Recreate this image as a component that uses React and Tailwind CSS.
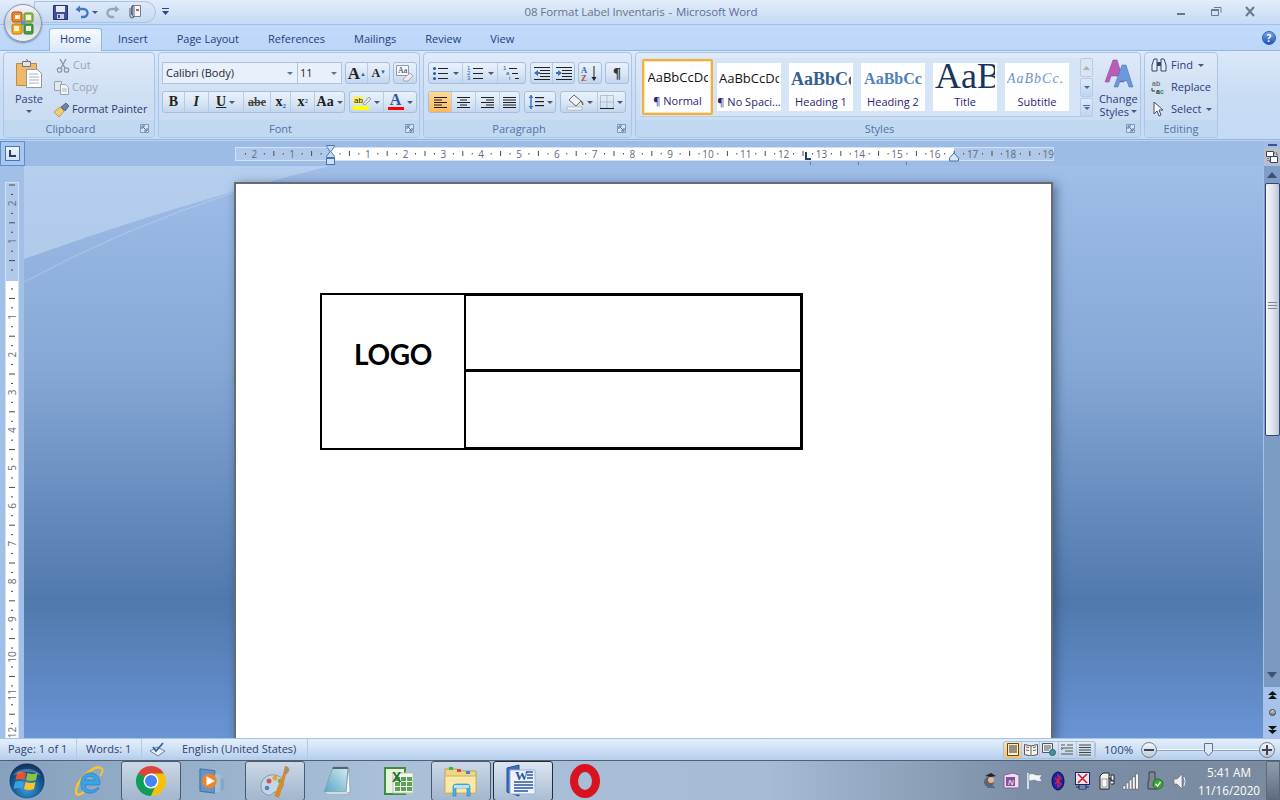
import * as React from "react"

const serif = "font-['Liberation_Serif',serif]"

function Caret({ className = "", color = "#44597f" }) {
  return (
    <svg width="6" height="3" viewBox="0 0 6 3" className={"shrink-0 " + className}>
      <path d="M0 0h6L3 3z" fill={color} />
    </svg>
  )
}

function Launcher() {
  return (
    <svg width="9" height="9" viewBox="0 0 9 9" className="shrink-0">
      <path d="M.5.5h8v8h-8z" fill="#d6e4f5" stroke="#7e98bd" />
      <path d="M2 2h3M2 2v3M3 3l3.5 3.5M7 4v3H4" fill="none" stroke="#4a6b9c" />
    </svg>
  )
}

function Group({ title, width, children, launcher = true, className = "" }) {
  return (
    <div className={"flex h-[86px] flex-col overflow-hidden rounded-[4px] border border-[#a9c6e8] bg-gradient-to-b from-[#dfeafa] via-[#cfdff3] to-[#c8dbf3] " + width + " " + className}>
      <div className="relative flex-1">{children}</div>
      <div className="flex h-[17px] items-center bg-[#c1d8f1] px-[5px] text-[11px] leading-none text-[#5273a8]">
        <span className={"flex-1 text-center " + (launcher ? "pr-[8px]" : "")}>{title}</span>
        {launcher && <Launcher />}
      </div>
    </div>
  )
}

function Strip({ children, className = "" }) {
  return (
    <div className={"flex h-[22px] items-stretch overflow-hidden rounded-[3px] border border-[#a5bfdf] bg-gradient-to-b from-[#e9f1fb] via-[#dbe7f6] to-[#c3d6ee] " + className}>
      {children}
    </div>
  )
}

function Cell({ w, children, last, active }) {
  return (
    <div className={"flex items-center justify-center gap-[3px] " + w + " " + (last ? "" : "border-r border-[#b6cbe5] ") + (active ? "bg-gradient-to-b from-[#fcd999] to-[#fbb859]" : "")}>
      {children}
    </div>
  )
}

function Lines({ kind }) {
  const rows = {
    left: [[0, 13], [0, 8], [0, 13], [0, 8], [0, 13]],
    center: [[0, 13], [3, 7], [0, 13], [3, 7], [0, 13]],
    right: [[0, 13], [5, 8], [0, 13], [5, 8], [0, 13]],
    justify: [[0, 13], [0, 13], [0, 13], [0, 13], [0, 13]],
  }[kind]
  return (
    <svg width="13" height="13" viewBox="0 0 13 13">
      {rows.map(([x, w], i) => (
        <rect key={i} x={x} y={1 + i * 2.5} width={w} height="1" fill="#1d1d1d" />
      ))}
    </svg>
  )
}

function ListIcon({ type }) {
  return (
    <svg width="18" height="15" viewBox="0 0 18 15">
      {[2, 7, 12].map((y, i) => (
        <g key={y}>
          {type === "bullet" && <rect x="1" y={y - 1} width="3" height="3" rx="1.5" fill="#2b5a9e" />}
          {type === "number" && <text x="0" y={y + 2} fontSize="6" fill="#2b5a9e" fontFamily="Liberation Sans">{i + 1}</text>}
          {type === "multi" && <text x={i * 3} y={y + 2} fontSize="6" fill="#2b5a9e" fontFamily="Liberation Sans">{["1", "a", "i"][i]}</text>}
          <rect x={type === "multi" ? 6 + i * 3 : 6} y={y} width={type === "multi" ? 8 - i * 2 : 10} height="1" fill="#222" />
        </g>
      ))}
    </svg>
  )
}

function IndentIcon({ dir }) {
  return (
    <svg width="16" height="14" viewBox="0 0 16 14">
      {[1, 4, 7, 10, 13].map((y, i) => (
        <rect key={y} x={i === 0 || i === 4 ? 0 : 6} y={y} width={i === 0 || i === 4 ? 16 : 10} height="1" fill="#222" />
      ))}
      <path d={dir === "out" ? "M0 7l4-3v2h2v2H4v2z" : "M6 7L2 4v2H0v2h2v2z"} fill="#3f6fb5" />
    </svg>
  )
}

function Save() {
  return (
    <svg width="15" height="15" viewBox="0 0 15 15">
      <path d="M.5.5h14v14h-14z" fill="#3d4f9e" stroke="#26306f" />
      <rect x="3" y="1" width="9" height="6" fill="#e6ecf7" />
      <rect x="4" y="9" width="7" height="5" fill="#c8cfe0" />
      <rect x="5" y="10" width="2" height="3" fill="#3d4f9e" />
    </svg>
  )
}

function Undo({ color, flip }) {
  return (
    <svg width="14" height="14" viewBox="0 0 14 14" className={flip ? "-scale-x-100" : ""}>
      <path d="M4 4h4.500a3.600 3.600 0 0 1 0 8H6" fill="none" stroke={color} strokeWidth="2.400" />
      <path d="M.5 4.500 5 .5v7z" fill={color} />
    </svg>
  )
}

function OfficeButton() {
  return (
    <div className="absolute left-[4px] top-[4px] z-10 flex h-[38px] w-[38px] items-center justify-center rounded-full border border-[#8a98aa] bg-gradient-to-b from-[#f4f6f9] via-[#c9d3de] to-[#eef2f6] shadow-[0_1px_2px_rgba(50,70,100,0.6)]">
      <svg width="24" height="24" viewBox="0 0 24 24">
        <rect x="1" y="1" width="10" height="10" rx="2" fill="#ed8a1f" stroke="#b4491a" />
        <rect x="4" y="4" width="5" height="4" fill="#fbf1dc" />
        <rect x="13" y="2" width="9" height="9" rx="1.500" fill="#9cc14a" stroke="#5c8a24" />
        <rect x="15" y="4" width="5" height="5" fill="#f4f8e5" />
        <rect x="1" y="13" width="10" height="10" rx="2" fill="#f3b315" stroke="#cf6b12" />
        <rect x="3" y="15" width="5" height="5" fill="#fdf3d0" />
        <rect x="13" y="13" width="9" height="10" rx="1.500" fill="#4f9e3c" stroke="#2f7a2e" />
        <rect x="15" y="15" width="5" height="5" fill="#e9f5e2" />
        <circle cx="12" cy="12" r="2.400" fill="#5a8fd1" />
      </svg>
    </div>
  )
}

function TitleBar() {
  return (
    <div className="relative grid h-[25px] grid-cols-[1fr_auto_1fr] items-center border-b border-[#9fc1ea] bg-gradient-to-b from-[#e3edfb] via-[#d4e3f7] to-[#c6daf5]">
      <div className="flex items-center">
        <div className="ml-[34px] flex h-[22px] w-[122px] items-center rounded-r-[11px] border border-[#a9c2e4] bg-gradient-to-b from-[#dde9f9] to-[#c6d9f2] pl-[18px]">
          <Save />
          <span className="ml-[7px]"><Undo color="#3b78c9" /></span>
          <Caret className="ml-[3px]" />
          <span className="ml-[8px]"><Undo color="#96a6ba" flip /></span>
          <svg width="16" height="16" viewBox="0 0 16 16" className="ml-[7px]">
            <path d="M5.500 1.500h8v11h-8z" fill="#f6f8fb" stroke="#6c7f99" />
            <rect x="9" y="5" width="3" height="2" fill="#d8564a" />
            <path d="M3 4v8a2 2 0 0 0 4 0V3a1.200 1.200 0 0 0-2.400 0v8" fill="none" stroke="#4c5e78" />
          </svg>
        </div>
        <svg width="7" height="8" viewBox="0 0 7 8" className="ml-[6px]">
          <rect width="7" height="1" fill="#2a4a85" />
          <path d="M0 3h7L3.500 7z" fill="#2a4a85" />
        </svg>
      </div>
      <div className="pl-[2px] text-[11.500px] leading-none tracking-[-0.1px] text-[#6a7488]">
        08 Format Label Inventaris <span className="mx-[1px]">-</span> <span className="text-[#5b6d9c]">Microsoft Word</span>
      </div>
      <div className="flex items-center justify-end">
        <svg width="92" height="14" viewBox="0 0 92 14" className="mr-[12px]">
          <rect x="1" y="8" width="8" height="2" fill="#6b7890" />
          <path d="M35.500 4.500h7v6h-7zM38 2.500h7v5" fill="none" stroke="#6b7890" />
          <rect x="35" y="4" width="8" height="2" fill="#6b7890" />
          <path d="M70 2l8 9M78 2l-8 9" stroke="#6b7890" strokeWidth="2" />
        </svg>
      </div>
    </div>
  )
}

function Tabs() {
  const names = ["Insert", "Page Layout", "References", "Mailings", "Review", "View"]
  return (
    <div className="flex h-[25px] items-end bg-gradient-to-b from-[#c3dbfa] to-[#bcd6f9] pl-[49px] text-[11px] text-[#223f7c]">
      <div className="-mb-px z-[1] flex h-[23px] w-[53px] items-center justify-center rounded-t-[3px] border border-b-0 border-[#92b6e3] bg-gradient-to-b from-[#f7fbff] to-[#dde9f9] pb-[1px]">Home</div>
      <div className="ml-[16px] flex h-[23px] items-center gap-[29px] pt-[1px]">
        {names.map((n) => <span key={n}>{n}</span>)}
      </div>
      <div className="ml-auto mr-[4px] flex h-[23px] items-center pb-[2px]">
        <div className="flex h-[14px] w-[14px] items-center justify-center rounded-full border border-[#2d5fb5] bg-gradient-to-b from-[#77a6ea] to-[#1c54b5] text-[10px] font-bold leading-none text-white">?</div>
      </div>
    </div>
  )
}

function Clipboard() {
  return (
    <Group title="Clipboard" width="w-[152px]">
      <div className="flex h-full pl-[10px] pt-[4px]">
        <div className="flex w-[30px] flex-col items-center pt-[1px] text-[11px] leading-none text-[#36427f]">
          <svg width="28" height="31" viewBox="0 0 28 31">
            <path d="M1.500 5.500h20v22h-20z" fill="#f0b968" stroke="#b98b4f" />
            <path d="M7.500 3.500h8v5h-8z" fill="#dfe3ea" stroke="#6c7480" />
            <path d="M11 1.500a2 2 0 0 1 2 2" fill="none" stroke="#6c7480" />
            <path d="M11.500 11.500h11l4 4v14h-15z" fill="#fff" stroke="#8d97a6" />
            <path d="M14 16h9M14 19h10M14 22h10M14 25h10" stroke="#a8b2c2" />
          </svg>
          <span className="mt-[4px]">Paste</span>
          <Caret className="mt-[6px]" />
        </div>
        <div className="ml-[10px] flex flex-col gap-[6px] text-[11px] leading-[16px]">
          <div className="flex h-[16px] items-center text-[#9ca5b3]">
            <svg width="16" height="15" viewBox="0 0 16 15" className="ml-[1px]">
              <path d="M5 1l5 9M11 1L6 10" stroke="#8e97a5" strokeWidth="1.400" />
              <circle cx="4.500" cy="12" r="2.200" fill="none" stroke="#8e97a5" strokeWidth="1.300" />
              <circle cx="11.500" cy="12" r="2.200" fill="none" stroke="#8e97a5" strokeWidth="1.300" />
            </svg>
            <span className="ml-[2px]">Cut</span>
          </div>
          <div className="flex h-[16px] items-center text-[#9ca5b3]">
            <svg width="16" height="15" viewBox="0 0 16 15">
              <path d="M.5 1.500h7v9h-7z" fill="#e3e7ee" stroke="#98a2b1" />
              <path d="M6.500 4.500h5l3 3v7h-8z" fill="#f3f5f9" stroke="#98a2b1" />
              <path d="M8 9h5M8 11h5" stroke="#aab3c0" />
            </svg>
            <span className="ml-[2px]">Copy</span>
          </div>
          <div className="flex h-[16px] items-center text-[#2c3c72]">
            <svg width="16" height="15" viewBox="0 0 16 15">
              <path d="M0 10l6-5 4 4-5 6z" fill="#f0cf6e" stroke="#a78431" strokeWidth=".7" />
              <path d="M7 5l5-4 3 3-4 5z" fill="#6c82ad" stroke="#3b4c73" strokeWidth=".7" />
            </svg>
            <span className="ml-[2px] whitespace-nowrap tracking-[-0.1px]">Format Painter</span>
          </div>
        </div>
      </div>
    </Group>
  )
}

function FontGroup() {
  const cls = serif + " font-bold text-[14px] leading-none text-[#222]"
  return (
    <Group title="Font" width="w-[262px]" className="ml-[3px]">
      <div className="flex flex-col gap-[7px] pl-[3px] pt-[9px]">
        <div className="flex h-[22px] items-stretch">
          <div className="flex w-[136px] items-center justify-between border border-[#abc3e0] bg-[#e8f0fb] pl-[3px] pr-[4px] text-[11px] text-[#26262e]">
            Calibri (Body)<Caret color="#5a7296" />
          </div>
          <div className="flex w-[44px] items-center justify-between border border-l-0 border-[#abc3e0] bg-[#e8f0fb] pl-[2px] pr-[4px] text-[11px] text-[#26262e]">
            11<Caret color="#5a7296" />
          </div>
          <Strip className="ml-[3px] w-[45px]">
            <Cell w="w-[23px]"><span className={serif + " text-[17px] font-bold leading-none text-[#222]"}>A<sup className="text-[6px] text-[#3765a8]">▲</sup></span></Cell>
            <Cell w="w-[21px]" last><span className={serif + " text-[12px] font-bold leading-none text-[#222]"}>A<sup className="text-[6px] text-[#3765a8]">▼</sup></span></Cell>
          </Strip>
          <Strip className="ml-[3px] w-[24px] justify-center">
            <svg width="20" height="18" viewBox="0 0 20 18" className="self-center">
              <path d="M1.500 1.500h12v10h-12z" fill="#f4f7fb" stroke="#8f9bad" />
              <text x="3" y="9" fontSize="8" fill="#333" fontFamily="Liberation Serif">Aa</text>
              <path d="M8 15l7-6 3 3-5 5H9z" fill="#f3e8ee" stroke="#8d8d98" strokeWidth=".7" />
            </svg>
          </Strip>
        </div>
        <div className="flex h-[22px] items-stretch">
          <Strip className="w-[183px]">
            <Cell w="w-[22px]"><span className={cls}>B</span></Cell>
            <Cell w="w-[24px]"><span className={cls + " italic"}>I</span></Cell>
            <Cell w="w-[35px]"><span className={cls + " underline"}>U</span><Caret /></Cell>
            <Cell w="w-[28px]"><span className={serif + " text-[12px] font-bold leading-none text-[#444] line-through"}>abe</span></Cell>
            <Cell w="w-[20px]"><span className={cls}>x<sub className="text-[7px] text-[#2b62ad]">2</sub></span></Cell>
            <Cell w="w-[24px]"><span className={cls}>x<sup className="text-[7px] text-[#2b62ad]">2</sup></span></Cell>
            <Cell w="w-[29px]" last><span className={cls}>Aa</span><Caret /></Cell>
          </Strip>
          <Strip className="ml-[4px] w-[68px]">
            <Cell w="w-[34px]">
              <svg width="18" height="16" viewBox="0 0 18 16">
                <rect y="2" width="10" height="8" fill="#f9f16b" />
                <text x="1" y="9" fontSize="8" fill="#222" fontFamily="Liberation Sans">ab</text>
                <path d="M10 10l6-7 2 2-6 6z" fill="#e3e6ec" stroke="#6d7480" strokeWidth=".6" />
                <rect y="12" width="16" height="4" fill="#ffff00" />
              </svg>
              <Caret />
            </Cell>
            <Cell w="w-[32px]" last>
              <div className="flex h-[16px] w-[16px] flex-col items-center">
                <span className={serif + " text-[16px] font-bold leading-[12px] text-[#2f5597]"}>A</span>
                <div className="mt-[1px] h-[4px] w-[16px] bg-[#ff0000]" />
              </div>
              <Caret />
            </Cell>
          </Strip>
        </div>
      </div>
    </Group>
  )
}

function Paragraph() {
  return (
    <Group title="Paragraph" width="w-[209px]" className="ml-[3px]">
      <div className="flex flex-col gap-[8px] pl-[4px] pt-[9px]">
        <div className="flex h-[21px] items-stretch">
          <Strip className="h-[21px] w-[98px]">
            <Cell w="w-[34px]"><ListIcon type="bullet" /><Caret /></Cell>
            <Cell w="w-[35px]"><ListIcon type="number" /><Caret /></Cell>
            <Cell w="w-[27px]" last><ListIcon type="multi" /></Cell>
          </Strip>
          <Strip className="ml-[4px] h-[21px] w-[45px]">
            <Cell w="w-[22px]"><IndentIcon dir="out" /></Cell>
            <Cell w="w-[21px]" last><IndentIcon dir="in" /></Cell>
          </Strip>
          <Strip className="ml-[3px] h-[21px] w-[24px] items-center justify-center">
            <svg width="18" height="17" viewBox="0 0 18 17" className="self-center">
              <text x="0" y="8" fontSize="8.500" fontWeight="bold" fill="#2c6bb3" fontFamily="Liberation Serif">A</text>
              <text x="0" y="16" fontSize="8.500" fontWeight="bold" fill="#b54a3a" fontFamily="Liberation Serif">Z</text>
              <path d="M13 1v13" stroke="#222" />
              <path d="M10.500 12h5L13 16z" fill="#222" />
            </svg>
          </Strip>
          <Strip className="ml-[3px] h-[21px] w-[24px] items-center justify-center">
            <span className={serif + " self-center text-[15px] font-bold leading-none text-[#333]"}>¶</span>
          </Strip>
        </div>
        <div className="flex h-[22px] items-stretch">
          <Strip className="w-[92px]">
            <Cell w="w-[23px]" active><Lines kind="left" /></Cell>
            <Cell w="w-[24px]"><Lines kind="center" /></Cell>
            <Cell w="w-[24px]"><Lines kind="right" /></Cell>
            <Cell w="w-[19px]" last><Lines kind="justify" /></Cell>
          </Strip>
          <Strip className="ml-[4px] w-[32px]">
            <Cell w="w-[30px]" last>
              <svg width="16" height="16" viewBox="0 0 16 16">
                <path d="M3 1v14" stroke="#3f76c2" strokeWidth="1.500" />
                <path d="M.5 4L3 1l2.500 3zM.5 12L3 15l2.500-3z" fill="#3f76c2" />
                {[3, 7, 11].map((y) => <rect key={y} x="7" y={y} width="9" height="1.200" fill="#222" />)}
              </svg>
              <Caret />
            </Cell>
          </Strip>
          <Strip className="ml-[4px] w-[66px]">
            <Cell w="w-[37px]">
              <svg width="18" height="17" viewBox="0 0 18 17">
                <path d="M8 1l7 6-5 5-7-6z" fill="#eef2f8" stroke="#5e6a7e" />
                <path d="M15 7c2 2 2 3 1.500 4" stroke="#8f6b2a" fill="none" strokeWidth="1.500" />
                <rect x="1" y="13" width="15" height="3" fill="#f7f7f0" stroke="#98a0a8" strokeWidth=".6" />
              </svg>
              <Caret />
            </Cell>
            <Cell w="w-[27px]" last>
              <svg width="14" height="14" viewBox="0 0 14 14">
                <path d="M.5.5h13v13H.5zM7 .5v13M.5 7h13" fill="none" stroke="#8b97a8" strokeDasharray="1 1" />
                <path d="M0 13.500h14" stroke="#222" />
              </svg>
              <Caret />
            </Cell>
          </Strip>
        </div>
      </div>
    </Group>
  )
}

function StyleItem({ label, preview, previewClass, active, align = "items-center justify-center" }) {
  return (
    <div className={"flex flex-col items-center overflow-hidden bg-white " + (active ? "-my-[3px] h-[56px] w-[71px] rounded-[2px] border-[2px] border-[#f4ae3d] shadow-[inset_0_0_0_1px_#fde6a8] pt-[1px]" : "h-[48px] w-[64px]")}>
      <div className={"flex h-[31px] w-[60px] overflow-hidden whitespace-nowrap leading-none " + align + " " + previewClass}>
        {preview}
      </div>
      <div className="mt-[1px] whitespace-nowrap text-[11px] leading-[14px] text-[#2b2374]">{label}</div>
    </div>
  )
}

function Styles() {
  return (
    <Group title="Styles" width="w-[506px]" className="ml-[3px]">
      <div className="flex h-full pl-[4px] pt-[5px]">
        <div className="flex h-[59px] w-[445px] items-center gap-[8px] border-b border-[#b3cce8] bg-[#d5e4f6] pl-[2px]">
          <StyleItem active label="¶ Normal" preview="AaBbCcDc" align="items-center justify-start" previewClass="text-[13px] text-[#111]" />
          <div className="-ml-[4px]">
            <StyleItem label="¶ No Spaci..." preview="AaBbCcDc" align="items-center justify-start" previewClass="text-[13px] text-[#111]" />
          </div>
          <StyleItem label="Heading 1" preview="AaBbCc" align="items-center justify-start" previewClass={serif + " text-[18px] font-bold text-[#365f91]"} />
          <StyleItem label="Heading 2" preview="AaBbCc" previewClass={serif + " text-[16px] font-bold text-[#4f81bd]"} />
          <StyleItem label="Title" preview="AaB" align="items-end justify-start" previewClass={serif + " text-[36px] text-[#17365d]"} />
          <StyleItem label="Subtitle" preview="AaBbCc." align="items-center justify-start" previewClass={serif + " text-[14px] italic tracking-[1px] text-[#6d94c6]"} />
        </div>
        <div className="ml-[-1px] flex h-[59px] w-[14px] flex-col gap-[1px]">
          {[0, 1, 2].map((i) => (
            <div key={i} className={"flex h-[19px] flex-col items-center justify-center rounded-[2px] border border-[#b5cce8] " + (i === 0 ? "bg-[#dbe4ef]" : "bg-gradient-to-b from-[#dfeafa] to-[#bfd5ef]")}>
              {i === 2 && <div className="mb-[1px] h-px w-[7px] bg-[#4d6a96]" />}
              {i === 0 ? (
                <svg width="7" height="4" viewBox="0 0 7 4"><path d="M0 4h7L3.500 0z" fill="#a5afbd" /></svg>
              ) : (
                <Caret color="#4d6a96" />
              )}
            </div>
          ))}
        </div>
        <div className="ml-[3px] flex w-[44px] flex-col items-center text-center text-[11px] leading-[13px] text-[#2d3a7c]">
          <svg width="31" height="32" viewBox="0 0 31 30">
            <path d="M10 1h4l7 22h-4l-2-6H8l-2 6H2z" fill="#b85db5" stroke="#8e3a92" strokeWidth=".5" />
            <path d="M19 6h4l7 22h-4l-2-6h-7l-2 6h-4z" fill="#6a9ad9" stroke="#3c6cb3" strokeWidth=".5" />
          </svg>
          <span className="mt-[2px]">Change</span>
          <span className="flex items-center gap-[2px]">Styles<Caret /></span>
        </div>
      </div>
    </Group>
  )
}

function Editing() {
  return (
    <Group title="Editing" width="w-[74px]" launcher={false} className="ml-[3px]">
      <div className="flex flex-col gap-[6px] pl-[6px] pt-[4px] text-[11px] leading-[16px] text-[#2d3a7c]">
        <div className="flex h-[16px] items-center gap-[4px]">
          <svg width="16" height="14" viewBox="0 0 16 14">
            <path d="M1 7l2-6h3v12H1zM15 7l-2-6h-3v12h5z" fill="#e5ecf8" stroke="#2f4678" />
            <rect x="6" y="4" width="4" height="4" fill="#2f4678" />
          </svg>
          Find<Caret className="ml-[1px]" />
        </div>
        <div className="flex h-[16px] items-center gap-[4px]">
          <svg width="16" height="15" viewBox="0 0 16 15">
            <text x="1" y="6" fontSize="7" fill="#777" fontWeight="bold" fontFamily="Liberation Sans">ab</text>
            <text x="5" y="14" fontSize="7" fill="#333" fontWeight="bold" fontFamily="Liberation Sans">a<tspan fill="#2a9a3a">c</tspan></text>
            <path d="M1 8v3h3" stroke="#333" fill="none" />
          </svg>
          Replace
        </div>
        <div className="flex h-[16px] items-center gap-[4px]">
          <svg width="16" height="15" viewBox="0 0 16 15">
            <path d="M3 0v12l3-3 2 5 2-1-2-5h4z" fill="#f6f8fb" stroke="#444e60" />
          </svg>
          Select<Caret className="ml-[1px]" />
        </div>
      </div>
    </Group>
  )
}

function Ribbon() {
  return (
    <div className="flex h-[90px] border-y border-[#92b6e0] bg-gradient-to-b from-[#dbe8f9] via-[#c9dcf4] to-[#c5daf4] pl-[3px] pt-[1px]">
      <Clipboard />
      <FontGroup />
      <Paragraph />
      <Styles />
      <Editing />
    </div>
  )
}

function HRuler() {
  const zero = 95
  const cm = 37.8
  const ticks = []
  for (let c = -3; c < 20; c++) {
    const x = zero + c * cm
    if (x + cm * 0.75 > 0) {
      ;[0.25, 0.75].forEach((f) => {
        if (x + f * cm > 2 && x + f * cm < 816) ticks.push(<rect key={c + "d" + f} x={x + f * cm} y="6" width="1" height="1.500" fill="#4a4a4a" />)
      })
      if (x + 0.5 * cm > 2 && x + 0.5 * cm < 816) ticks.push(<rect key={c + "l"} x={x + 0.5 * cm} y="4" width="1" height="5" fill="#4a4a4a" />)
    }
  }
  const nums = [-2, -1, 1, 2, 3, 4, 5, 6, 7, 8, 9, 10, 11, 12, 13, 14, 15, 16, 17, 18, 19]
  return (
    <svg width="820" height="24" viewBox="0 0 820 24" className="block">
      <rect x=".5" y="6.500" width="818" height="13" fill="#b0c9eb" stroke="#d2e1f5" />
      <rect x="95" y="7" width="624" height="12" fill="#fff" />
      <g transform="translate(0 6)">
        {ticks}
        {nums.map((n) => (
          <text key={n} x={zero + n * cm} y="10.500" textAnchor="middle" fontSize="10" fontFamily="Open Sans" fill="#5f6b80">{Math.abs(n)}</text>
        ))}
      </g>
      <path d="M91.500 4.500h8v1l-3.500 5 3.500 5v1h-8v-1l3.500-5-3.500-5z" fill="#c9daf0" stroke="#4a74ae" />
      <rect x="91.500" y="17.500" width="8" height="6" fill="#d2e0f2" stroke="#4a74ae" />
      <path d="M719 12l4.500 5v3h-9v-3z" fill="#d7e4f5" stroke="#4a74ae" />
      <path d="M570 11v8h6v-2h-4v-6z" fill="#243f6b" />
      <rect x="575" y="21" width="1" height="3" fill="#7a7a6c" />
      <rect x="623" y="21" width="1" height="3" fill="#7a7a6c" />
      <rect x="671" y="21" width="1" height="3" fill="#7a7a6c" />
    </svg>
  )
}

function RulerRow() {
  return (
    <div className="flex h-[26px] border-t border-[#c0d3ec] bg-[#9cbce5]">
      <div className="flex h-[25px] w-[25px] items-center justify-center border border-[#5d8bd6] bg-[#a9c6ec]">
        <div className="flex h-[15px] w-[15px] items-center justify-center border border-[#4a74ae] bg-gradient-to-b from-[#eef4fc] to-[#d2e1f5]">
          <svg width="7" height="7" viewBox="0 0 7 7"><path d="M0 0h2v5h5v2H0z" fill="#243f6b" /></svg>
        </div>
      </div>
      <div className="ml-[210px]"><HRuler /></div>
      <div className="ml-auto flex h-[25px] w-[16px] flex-col items-center bg-[#a1bfe6]">
        <div className="mt-[3px] h-[2px] w-[9px] bg-[#3c5487]" />
        <div className="mt-[2px] flex h-[17px] w-[16px] items-center justify-center bg-[#b8bfc9]">
          <svg width="12" height="12" viewBox="0 0 12 12">
            <path d="M.5.5h7v5h-7zM4.500 5.500h7v6h-7z" fill="#fff" stroke="#39435a" />
            <path d="M8 2h3v3M2 7v3h2" fill="none" stroke="#39435a" strokeDasharray="1 1" />
          </svg>
        </div>
      </div>
    </div>
  )
}

function VRuler() {
  const zero = 97
  const cm = 37.8
  const marks = []
  for (let c = -3; c < 13; c++) {
    const y = zero + c * cm
    if (y + 0.5 * cm > 2 && y + 0.5 * cm < 556) marks.push(<rect key={c + "l"} x="4" y={y + 0.5 * cm} width="6" height="1" fill="#4a4a4a" />)
    ;[0.25, 0.75].forEach((f) => {
      if (y + f * cm > 2 && y + f * cm < 556) marks.push(<rect key={c + "d" + f} x="6" y={y + f * cm} width="2" height="1" fill="#4a4a4a" />)
    })
  }
  const nums = [-2, -1, 1, 2, 3, 4, 5, 6, 7, 8, 9, 10, 11, 12]
  return (
    <svg width="14" height="556" viewBox="0 0 14 556" className="block">
      <rect x=".5" y=".5" width="13" height="556" fill="#b0c9eb" stroke="#d2e1f5" />
      <rect x="1" y="99" width="12" height="458" fill="#fff" />
      {marks}
      {nums.map((n) => (
        <text key={n} transform={`translate(10.500 ${zero + n * cm}) rotate(-90)`} textAnchor="middle" fontSize="10" fontFamily="Open Sans" fill="#5f6b80">{Math.abs(n)}</text>
      ))}
    </svg>
  )
}

function Page() {
  return (
    <div className="ml-[210px] w-[819px] border-l-2 border-r-2 border-t-2 border-[#666c74] bg-white pl-[84px] pt-[109px] shadow-[3px_2px_10px_rgba(40,60,90,0.6)]">
      <div className="flex h-[157px] w-[483px]">
        <div className="flex w-[144px] justify-center border-2 border-r-0 border-black pt-[42px] font-['Lato',sans-serif] text-[28px] font-bold leading-[34px] tracking-[-0.3px] text-black">
          LOGO
        </div>
        <div className="flex flex-1 flex-col border-[3px] border-l-2 border-black">
          <div className="h-[76px] border-b-[3px] border-black" />
          <div className="flex-1" />
        </div>
      </div>
    </div>
  )
}

function ScrollBar() {
  return (
    <div className="ml-auto flex w-[17px] flex-col items-center border-l border-[#a5c2e8] bg-gradient-to-b from-[#7e9dc9] via-[#7d9cc4] to-[#7a98c0]">
      <div className="flex h-[17px] w-full items-center justify-center">
        <svg width="10" height="6" viewBox="0 0 10 6"><path d="M0 6h10L5 0z" fill="#3d4f72" /></svg>
      </div>
      <div className="flex h-[253px] w-[15px] flex-col items-center justify-end rounded-[2px] border border-[#33477a] bg-gradient-to-r from-[#f3f5f8] via-[#e0e5ec] to-[#bcc6d2] pb-[126px]">
        <div className="h-px w-[9px] bg-[#7d8795]" />
        <div className="mt-[2px] h-px w-[9px] bg-[#7d8795]" />
        <div className="mt-[2px] h-px w-[9px] bg-[#7d8795]" />
      </div>
      <div className="mt-auto flex h-[19px] items-start pt-[4px]">
        <svg width="10" height="6" viewBox="0 0 10 6"><path d="M0 0h10L5 6z" fill="#3d4f72" /></svg>
      </div>
      <div className="flex h-[51px] w-full flex-col items-center justify-between bg-[#a7c2ec] py-[4px]">
        <svg width="9" height="9" viewBox="0 0 9 9"><path d="M0 4L4.500 0 9 4zM0 8l4.500-4L9 8z" fill="#111" /></svg>
        <div className="h-[7px] w-[7px] rounded-full border border-[#444] bg-gradient-to-b from-[#d8d8d8] to-[#777]" />
        <svg width="9" height="9" viewBox="0 0 9 9"><path d="M0 1l4.500 4L9 1zM0 5l4.500 4L9 5z" fill="#111" /></svg>
      </div>
    </div>
  )
}

function Document() {
  return (
    <div className="relative flex h-[572px] overflow-hidden bg-[linear-gradient(to_bottom,#9fbee8_0%,#86a8d6_35%,#5079ad_76%,#6a94d4_100%)]">
      <svg width="320" height="125" viewBox="0 0 320 125" className="absolute left-[24px] top-0">
        <path d="M0 0H306Q160 36 0 93z" fill="#c8dcf4" fillOpacity=".55" />
        <path d="M0 116Q100 62 209 27" fill="none" stroke="#c8dcf4" strokeOpacity=".45" />
      </svg>
      <div className="z-[1] w-[24px] self-stretch bg-[#a2bfe7] pl-[5px] pt-[16px]"><VRuler /></div>
      <div className="z-[1] mt-[16px] flex"><Page /></div>
      <ScrollBar />
    </div>
  )
}

function ViewIcon({ i }) {
  return (
    <svg width="14" height="13" viewBox="0 0 14 13">
      {i === 0 && <path d="M1.500.5h11v12h-11z" fill="#fbeecb" stroke="#514b3a" />}
      {i === 0 && <path d="M3 3h8M3 5h8M3 7h8M3 9h8" stroke="#333" />}
      {i === 1 && <path d="M.5 1.500 7 3l6.500-1.500v10L7 13 .5 11.500z" fill="#f7f3e8" stroke="#555" />}
      {i === 1 && <path d="M7 3v10M2 4l3 .5M2 7l3 .5M9 4.500l3-.5M9 7.500l3-.5" stroke="#666" />}
      {i === 2 && <path d="M.5.5h10v9H.5z" fill="#eef2f7" stroke="#555" />}
      {i === 2 && <path d="M2 3h7M2 5h7M2 7h5" stroke="#555" />}
      {i === 2 && <circle cx="10.500" cy="9.500" r="3" fill="#3f8fb4" stroke="#2a6a4a" />}
      {i === 3 && <path d="M1 2h4M7 2h6M3 5h10M5 8h8M1 11h12M1 4.500l2 1-2 1" stroke="#555" fill="none" />}
      {i === 4 && <path d="M1 2h12M1 4.500h12M1 7h12M1 9.500h12M1 12h12" stroke="#444" />}
    </svg>
  )
}

function ZoomBtn({ plus }) {
  return (
    <div className="flex h-[16px] w-[16px] items-center justify-center rounded-full border border-[#73808f] bg-gradient-to-b from-[#f5f8fc] to-[#bcc9da]">
      <svg width="10" height="10" viewBox="0 0 10 10">
        <rect y="4" width="10" height="2" fill="#3c4658" />
        {plus && <rect x="4" width="2" height="10" fill="#3c4658" />}
      </svg>
    </div>
  )
}

function StatusBar() {
  return (
    <div className="flex h-[22px] items-stretch border-t border-[#a6c2e6] bg-gradient-to-b from-[#e3eefb] via-[#cfe0f5] to-[#b4cdec] text-[11px] text-[#2f4272]">
      <div className="flex w-[77px] items-center border-r border-[#b4c9e4] pl-[8px]">Page: 1 of 1</div>
      <div className="flex w-[65px] items-center border-r border-[#b4c9e4] pl-[9px]">Words: 1</div>
      <div className="flex w-[166px] items-center border-r border-[#b4c9e4] pl-[7px]">
        <svg width="18" height="16" viewBox="0 0 18 16">
          <path d="M1 9l7-4 8 4-7 5z" fill="#e8edf5" stroke="#6d7f9c" />
          <path d="M4 5l3 4 7-8" fill="none" stroke="#3661a8" strokeWidth="1.800" />
        </svg>
        <span className="ml-[15px] whitespace-nowrap">English (United States)</span>
      </div>
      <div className="ml-auto flex items-center">
        <div className="flex h-[18px] w-[93px] items-stretch overflow-hidden rounded-[3px] border border-[#a5bfdf] bg-gradient-to-b from-[#dfe9f7] to-[#bcd1ea]">
          {[0, 1, 2, 3, 4].map((i) => (
            <div key={i} className={"flex flex-1 items-center justify-center border-r border-[#b3c7e0] " + (i === 0 ? "bg-gradient-to-b from-[#fde3ac] to-[#fbbf63]" : "")}>
              <ViewIcon i={i} />
            </div>
          ))}
        </div>
        <span className="ml-[8px] w-[28px] text-[11.500px] text-[#2c3f78]">100%</span>
        <div className="ml-[9px]"><ZoomBtn /></div>
        <div className="relative flex h-[16px] w-[102px] items-center">
          <div className="h-px w-full bg-[#f7fafe] shadow-[0_1px_0_#8ea6c6]" />
          <svg width="9" height="14" viewBox="0 0 9 14" className="absolute left-[47px] top-[1px]">
            <path d="M.5.5h8v8L4.500 13 .5 8.500z" fill="#dfe7f2" stroke="#5d7090" />
          </svg>
        </div>
        <div className="mr-[5px]"><ZoomBtn plus /></div>
      </div>
    </div>
  )
}

function IconOrb() {
  return (
    <svg width="38" height="38" viewBox="0 0 38 38">
      <defs>
        <radialGradient id="orb" cx=".5" cy=".7" r=".7">
          <stop offset="0" stopColor="#3ea0d8" />
          <stop offset=".6" stopColor="#15558f" />
          <stop offset="1" stopColor="#0d2f55" />
        </radialGradient>
      </defs>
      <circle cx="19" cy="19" r="18" fill="url(#orb)" stroke="#c9d6e4" strokeOpacity=".5" />
      <path d="M9 11q4-2 9 0l-1.500 7q-5-2-9 0z" fill="#e8502e" />
      <path d="M19.500 11q5 2 10 0l-1.500 7q-5 2-10 0z" fill="#8bc53f" />
      <path d="M7 20q4-2 9 0l-1.500 7q-5-2-9 0z" fill="#3aa0de" />
      <path d="M17.500 20q5 2 10 0L26 27q-5 2-10 0z" fill="#f8c32c" />
      <path d="M5 14a15 11 0 0 1 28 0q-14-8-28 0z" fill="#fff" fillOpacity=".25" />
    </svg>
  )
}

function IconIE() {
  return (
    <svg width="34" height="34" viewBox="0 0 34 34">
      <path d="M28 3C20 3 4 16 4 28c0 4 4 3 8 0" fill="none" stroke="#f4c430" strokeWidth="2.500" />
      <path d="M9 20a9.500 9.500 0 1 1 18.500 1H13c0 6 8 7 12 3h2c-3 7-18 8-18-4zM13 16h10c-1-5-9-5-10 0z" fill="#39a5e6" stroke="#1d74bd" strokeWidth=".6" />
      <path d="M27 4c4-1 5 3 1 8" fill="none" stroke="#f4c430" strokeWidth="2" />
    </svg>
  )
}

function IconChrome() {
  return (
    <svg width="32" height="32" viewBox="0 0 32 32">
      <path d="M16 16L3 8.500A15 15 0 0 1 29 8.500z" fill="#db4437" />
      <path d="M3 8.500A15 15 0 0 0 16 31l7-13z" fill="#0f9d58" />
      <path d="M29 8.500H16l6 9-6 13.500A15 15 0 0 0 29 8.500z" fill="#f4c20d" />
      <circle cx="16" cy="16" r="7.500" fill="#fff" />
      <circle cx="16" cy="16" r="6" fill="#4285f4" />
    </svg>
  )
}

function IconWMP() {
  return (
    <svg width="28" height="30" viewBox="0 0 30 30">
      <path d="M1 2l16 2v24L1 26z" fill="#5f95c9" stroke="#3a6fa3" />
      <path d="M17 7l6 1v18l-6 2z" fill="#9ec0dc" />
      <path d="M23 12l4 1v11l-4 2z" fill="#7fa3c2" fillOpacity=".7" />
      <circle cx="11" cy="15" r="8" fill="#f0832a" />
      <path d="M8 10l9 5-9 5z" fill="#fff" />
    </svg>
  )
}

function IconPaint() {
  return (
    <svg width="32" height="34" viewBox="0 0 32 34">
      <path d="M2 22C2 12 14 8 21 13c7 5 3 14-5 15-3 .5-3 4-7 3-4-1-7-4-7-9z" fill="#c4d6e6" stroke="#7f95ab" />
      <circle cx="10" cy="17" r="2.500" fill="#d9534f" />
      <circle cx="16" cy="14" r="2.500" fill="#e0a82e" />
      <circle cx="21" cy="17" r="2.300" fill="#74b04a" />
      <circle cx="8" cy="24" r="2.300" fill="#4a84c4" />
      <path d="M15 32l9-22 3 1-7 23z" fill="#d58a2e" />
      <path d="M24 10l2-8c3 0 5 3 4 5l-3 4z" fill="#b88a5a" />
    </svg>
  )
}

function IconNotepad() {
  return (
    <svg width="30" height="32" viewBox="0 0 30 32">
      <defs>
        <linearGradient id="note" x1="0" y1="1" x2="1" y2="0">
          <stop offset="0" stopColor="#58a4c4" />
          <stop offset="1" stopColor="#d5edf4" />
        </linearGradient>
      </defs>
      <path d="M27 3l1 24-5 2z" fill="#f2f4f6" stroke="#8b98a3" strokeWidth=".6" />
      <path d="M11 2h15l-2 25H2z" fill="url(#note)" stroke="#7fa6b8" />
      <path d="M2 27h22l3 2H6z" fill="#e8ecef" stroke="#98a8b4" strokeWidth=".5" />
      <path d="M11 2h15v2H10.500z" fill="#59646e" />
    </svg>
  )
}

function IconExcel() {
  return (
    <svg width="32" height="32" viewBox="0 0 32 32">
      <path d="M2 3h20v26H2z" fill="#e7f2e0" stroke="#3f8f3a" strokeWidth="2" />
      <path d="M10 8h20v20H10z" fill="#f6f8f2" stroke="#b7c7ae" />
      {[12, 17, 22].map((y) => [12, 18, 24].map((x) => <rect key={x + "-" + y} x={x} y={y} width="5" height="4" fill="#5da252" />))}
      <text x="9" y="17" fontSize="14" fontWeight="bold" fill="#20702c" fontFamily="Liberation Sans">X</text>
    </svg>
  )
}

function IconExplorer() {
  return (
    <svg width="34" height="32" viewBox="0 0 34 32">
      <path d="M1 4h12l2 2h17v22H1z" fill="#f0d67e" stroke="#bfa252" />
      <rect x="5" y="2" width="4" height="3" fill="#3db34d" />
      <rect x="13" y="4" width="4" height="3" fill="#d54b3f" />
      <rect x="22" y="6" width="4" height="3" fill="#3b8ad0" />
      <path d="M1 11h31v17H1z" fill="#f9e9a8" stroke="#cdb264" />
      <path d="M9 31v-9q0-3 3-3h11q3 0 3 3v9h-3v-8H12v8z" fill="#4fb0e0" stroke="#2a84b8" strokeWidth=".6" />
      <rect x="10" y="20" width="15" height="3" fill="#b8e3f6" />
    </svg>
  )
}

function IconWord() {
  return (
    <svg width="34" height="34" viewBox="0 0 34 34">
      <path d="M1 4l12-3v31L1 28z" fill="#3f6fc0" stroke="#2a4f96" />
      <path d="M4 6h25v24H4z" fill="#eef3fb" stroke="#9fb4d4" />
      <text x="9" y="16" fontSize="13" fontWeight="bold" fill="#2b579a" fontFamily="Liberation Serif">W</text>
      <path d="M20 8h7M21 11h6M21 14h6M8 18h19M8 21h19M8 24h19M8 27h14" stroke="#2b579a" strokeWidth="1.500" />
    </svg>
  )
}

function IconOpera() {
  return (
    <svg width="32" height="34" viewBox="0 0 32 34">
      <ellipse cx="16" cy="17" rx="11" ry="13" fill="none" stroke="#d8131f" strokeWidth="8" />
    </svg>
  )
}

function TaskButton({ children, open }) {
  return (
    <div className={"flex h-[40px] w-[60px] items-center justify-center rounded-[3px] " + (open === 2 ? "border border-[#222c3a] bg-gradient-to-b from-[#dce6f2] to-[#a9bdd4]" : open ? "border border-[#4c5a6e] bg-gradient-to-b from-[#cbd8e7] to-[#a2b6cd]" : "")}>
      {children}
    </div>
  )
}

function Tray() {
  return (
    <div className="ml-auto flex h-full items-center">
      <svg width="205" height="20" viewBox="0 0 205 20">
        <g transform="translate(0 2)">
          <circle cx="7" cy="9" r="5" fill="#5a6472" />
          <circle cx="9" cy="7" r="3" fill="#e9b58f" />
          <path d="M5 15c0-3 8-3 8 0z" fill="#3f6fa8" />
          <path d="M3 3l6-3 5 3-5 1z" fill="#23272c" />
        </g>
        <g transform="translate(21 2)">
          <path d="M1 2l9-2 6 2v13H1z" fill="#e9e2ec" stroke="#8d5c9a" />
          <rect x="3" y="4" width="9" height="9" fill="#8a4d99" />
          <text x="5" y="12" fontSize="8" fontStyle="italic" fill="#fff" fontFamily="Liberation Sans">N</text>
        </g>
        <g transform="translate(45 2)">
          <path d="M1 0v16" stroke="#f3f5f8" strokeWidth="1.500" />
          <path d="M2 1q4-1 7 1l6 0-2 3 2 3q-5 1-7-1l-6 1z" fill="#f3f5f8" stroke="#55606e" strokeWidth=".4" />
        </g>
        <g transform="translate(70 1)">
          <ellipse cx="6" cy="9" rx="6" ry="9" fill="#1024c7" stroke="#0a1020" />
          <path d="M3 6l6 6-3 3V3l3 3-6 6" fill="none" stroke="#ee2222" strokeWidth="1.200" />
        </g>
        <g transform="translate(93 1)">
          <rect x=".5" y=".5" width="14" height="12" fill="#e6e6f6" stroke="#1a2468" />
          <path d="M3 2l9 9M12 2l-9 9" stroke="#e01818" strokeWidth="1.600" />
          <path d="M1 15h13M4 13h7v4H4z" fill="#d8d8de" stroke="#1a2468" />
        </g>
        <g transform="translate(117 1)">
          <path d="M1 4l3-3h6v16H1z" fill="#f2f2f2" stroke="#222" />
          <rect x="3" y="7" width="5" height="8" fill="#fff" stroke="#444" strokeWidth=".5" />
          <path d="M9 6h3V3M12 6v3h3M12 3h3v9h-3" fill="#f2f2f2" stroke="#222" />
        </g>
        <g transform="translate(141 3)">
          {[0, 1, 2, 3, 4].map((i) => (
            <rect key={i} x={i * 3.200} y={12 - i * 3} width="2.400" height={3 + i * 3} fill="#f3f3f3" stroke="#333" strokeWidth=".3" />
          ))}
        </g>
        <g transform="translate(165 1)">
          <path d="M2 0h6v8l2 2v7H1v-7l1-2z" fill="#7d8693" stroke="#3a4048" />
          <circle cx="11" cy="12" r="5" fill="#3aa63a" stroke="#256e25" />
          <path d="M8.500 12l2 2 3-4" fill="none" stroke="#fff" strokeWidth="1.300" />
        </g>
        <g transform="translate(191 2)">
          <path d="M1 6h3l5-5v15l-5-5H1z" fill="#eceef1" stroke="#555" strokeWidth=".5" />
          <path d="M11 4q2 4 0 9" fill="none" stroke="#eceef1" />
        </g>
      </svg>
      <div className="ml-[7px] flex w-[70px] flex-col items-center text-[11.700px] leading-[18px] text-white">
        <span>5:41 AM</span>
        <span>11/16/2020</span>
      </div>
      <div className="ml-[2px] h-full w-[14px] rounded-l-[1px] border border-[#5b6878] bg-gradient-to-b from-[#8f9db0] to-[#5f6d80]" />
    </div>
  )
}

function Taskbar() {
  return (
    <div className="flex h-[40px] items-center border-t border-[#54606f] bg-[linear-gradient(to_right,#86a0bd_0%,#a9c0d8_30%,#a6bcd4_60%,#7b8ea6_80%,#7a8ba0_100%)] pl-[8px]">
      <div className="flex w-[51px]"><IconOrb /></div>
      <div className="flex gap-[2px]">
        <TaskButton><IconIE /></TaskButton>
        <TaskButton open><IconChrome /></TaskButton>
        <TaskButton><IconWMP /></TaskButton>
        <TaskButton open><IconPaint /></TaskButton>
        <TaskButton><IconNotepad /></TaskButton>
        <TaskButton><IconExcel /></TaskButton>
        <TaskButton open><IconExplorer /></TaskButton>
        <TaskButton open={2}><IconWord /></TaskButton>
        <TaskButton><IconOpera /></TaskButton>
      </div>
      <Tray />
    </div>
  )
}

export default function App() {
  return (
    <div className="relative flex h-[800px] w-[1280px] flex-col overflow-hidden font-['Open_Sans',sans-serif]">
      <OfficeButton />
      <TitleBar />
      <Tabs />
      <Ribbon />
      <RulerRow />
      <Document />
      <StatusBar />
      <Taskbar />
    </div>
  )
}
